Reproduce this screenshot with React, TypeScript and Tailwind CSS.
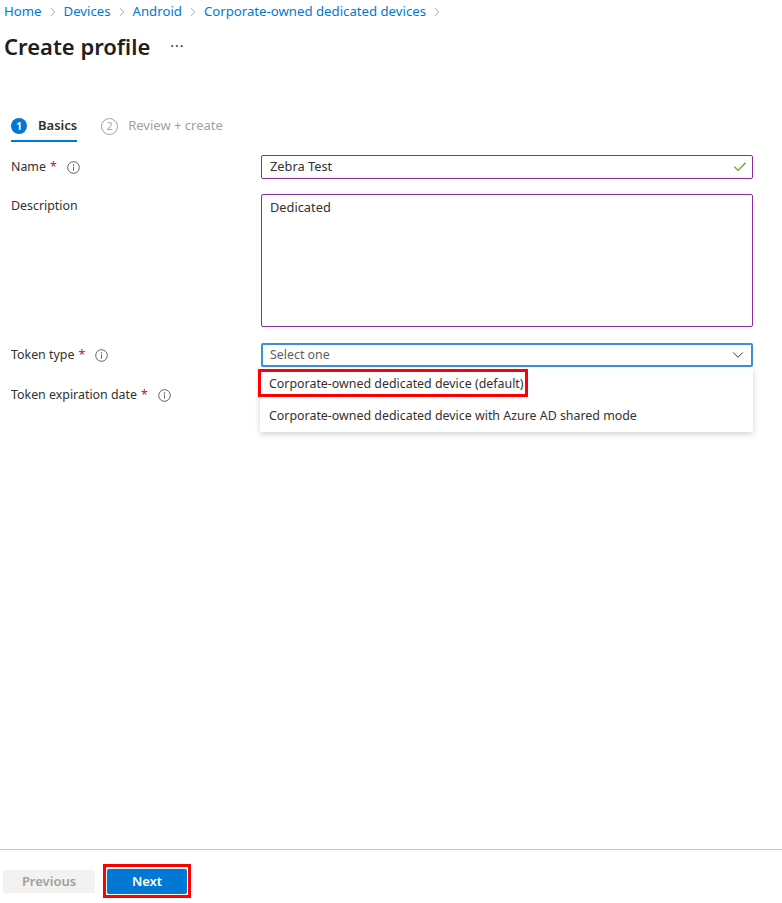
import { ChevronRight, ChevronDown, Check } from 'lucide-react';

const FONT = "font-['Noto_Sans','Open_Sans',sans-serif]";

function Info() {
  return (
    <svg width="13" height="13" viewBox="0 0 13 13" className="text-[#605e5c]">
      <circle cx="6.5" cy="6.5" r="5.8" fill="none" stroke="currentColor" strokeWidth="1" />
      <circle cx="6.5" cy="4" r="0.8" fill="currentColor" />
      <rect x="6" y="5.6" width="1" height="4" fill="currentColor" />
    </svg>
  );
}

function Label({ text, required, info }: { text: string; required?: boolean; info?: boolean }) {
  return (
    <div className="flex h-6 w-[250px] shrink-0 items-center text-[12.4px] text-[#323130]">
      <span>{text}</span>
      {required && <span className="ml-[4px] text-[#a4262c]">*</span>}
      {info && <span className="ml-[10px] flex"><Info /></span>}
    </div>
  );
}

const crumbs = ['Home', 'Devices', 'Android', 'Corporate-owned dedicated devices'];

export default function App() {
  return (
    <div className={`${FONT} flex h-[903px] flex-col bg-white text-[#323130]`}>
      {/* breadcrumb */}
      <nav className="flex h-[18px] items-center px-[4px] pt-[5px] text-[13.2px] text-[#0078d4]">
        {crumbs.map((c) => (
          <span key={c} className="flex items-center">
            <span>{c}</span>
            <ChevronRight size={14} strokeWidth={1.3} className="mx-[4px] text-[#8a8886]" />
          </span>
        ))}
      </nav>

      {/* title */}
      <div className="mt-[13px] flex h-[30px] items-center px-[4px]">
        <h1 className="text-[22px] font-semibold text-[#201f1e]">Create profile</h1>
        <span className="ml-[20px] text-[14px] leading-none tracking-[1px] text-[#323130]">···</span>
      </div>

      {/* tabs */}
      <div className="mt-[57px] flex h-[26px] items-start px-[11px]">
        <div className="flex flex-col">
          <div className="flex h-[16px] items-center">
            <span className="flex h-[16px] w-[16px] items-center justify-center rounded-full bg-[#0078d4] text-[10px] font-bold text-white">1</span>
            <span className="ml-[11px] text-[13px] font-semibold text-[#323130]">Basics</span>
          </div>
          <div className="mt-[6px] h-[2px] w-full bg-[#0078d4]" />
        </div>
        <div className="ml-[24px] flex h-[16px] items-center">
          <span className="flex h-[17px] w-[17px] items-center justify-center rounded-full border border-[#a19f9d] text-[10px] text-[#a19f9d]">2</span>
          <span className="ml-[10px] text-[13px] text-[#a19f9d]">Review + create</span>
        </div>
      </div>

      {/* form */}
      <div className="mt-[11px] flex flex-col pl-[11px] pr-[29px]">
        <div className="flex">
          <Label text="Name" required info />
          <div className="flex h-6 flex-1 items-center justify-between rounded-[2px] border border-[#8a2da5] pl-[8px] pr-[4px] text-[12.8px]">
            <span>Zebra Test</span>
            <Check size={16} strokeWidth={1.6} className="text-[#57a300]" />
          </div>
        </div>

        <div className="mt-[15px] flex">
          <Label text="Description" />
          <div className="h-[133px] flex-1 rounded-[2px] border border-[#8a2da5] px-[8px] pt-[3px] text-[12.8px]">Dedicated</div>
        </div>

        <div className="mt-[16px] flex">
          <Label text="Token type" required info />
          <div className="relative flex-1">
            <div className="flex h-6 items-center justify-between rounded-[2px] border-2 border-[#3c8fd8] pl-[7px] pr-[4px] text-[12.4px] text-[#605e5c]">
              <span>Select one</span>
              <ChevronDown size={18} strokeWidth={1.3} className="text-[#323130]" />
            </div>
            <div className="absolute left-[-1px] right-0 top-[25px] z-10 flex flex-col bg-white text-[12.4px] text-[#323130] shadow-[0_2px_6px_rgba(0,0,0,0.18)]">
              <div className="relative flex h-[32px] items-center px-[9px]">
                <span>Corporate-owned dedicated device (default)</span>
                <div className="absolute left-[-2px] top-[1px] h-[28px] w-[270px] border-[3px] border-[#ff0000]" />
              </div>
              <div className="flex h-[32px] items-center px-[9px]">Corporate-owned dedicated device with Azure AD shared mode</div>
            </div>
          </div>
        </div>

        <div className="mt-[16px] flex">
          <Label text="Token expiration date" required info />
        </div>
      </div>

      <div className="flex-1" />

      {/* footer */}
      <footer className="flex h-[54px] items-start border-t border-[#c8c6c4] pl-[3px] pt-[14px]">
        <button className="mt-[6px] h-[23px] w-[92px] rounded-[2px] bg-[#f3f2f1] text-[13px] font-semibold text-[#a19f9d]">Previous</button>
        <div className="ml-[8px] border-[3px] border-[#ff0000] p-[1px]">
          <button className="h-[25px] w-[80px] rounded-[2px] bg-[#0078d4] text-[13px] font-semibold text-white">Next</button>
        </div>
      </footer>
    </div>
  );
}
